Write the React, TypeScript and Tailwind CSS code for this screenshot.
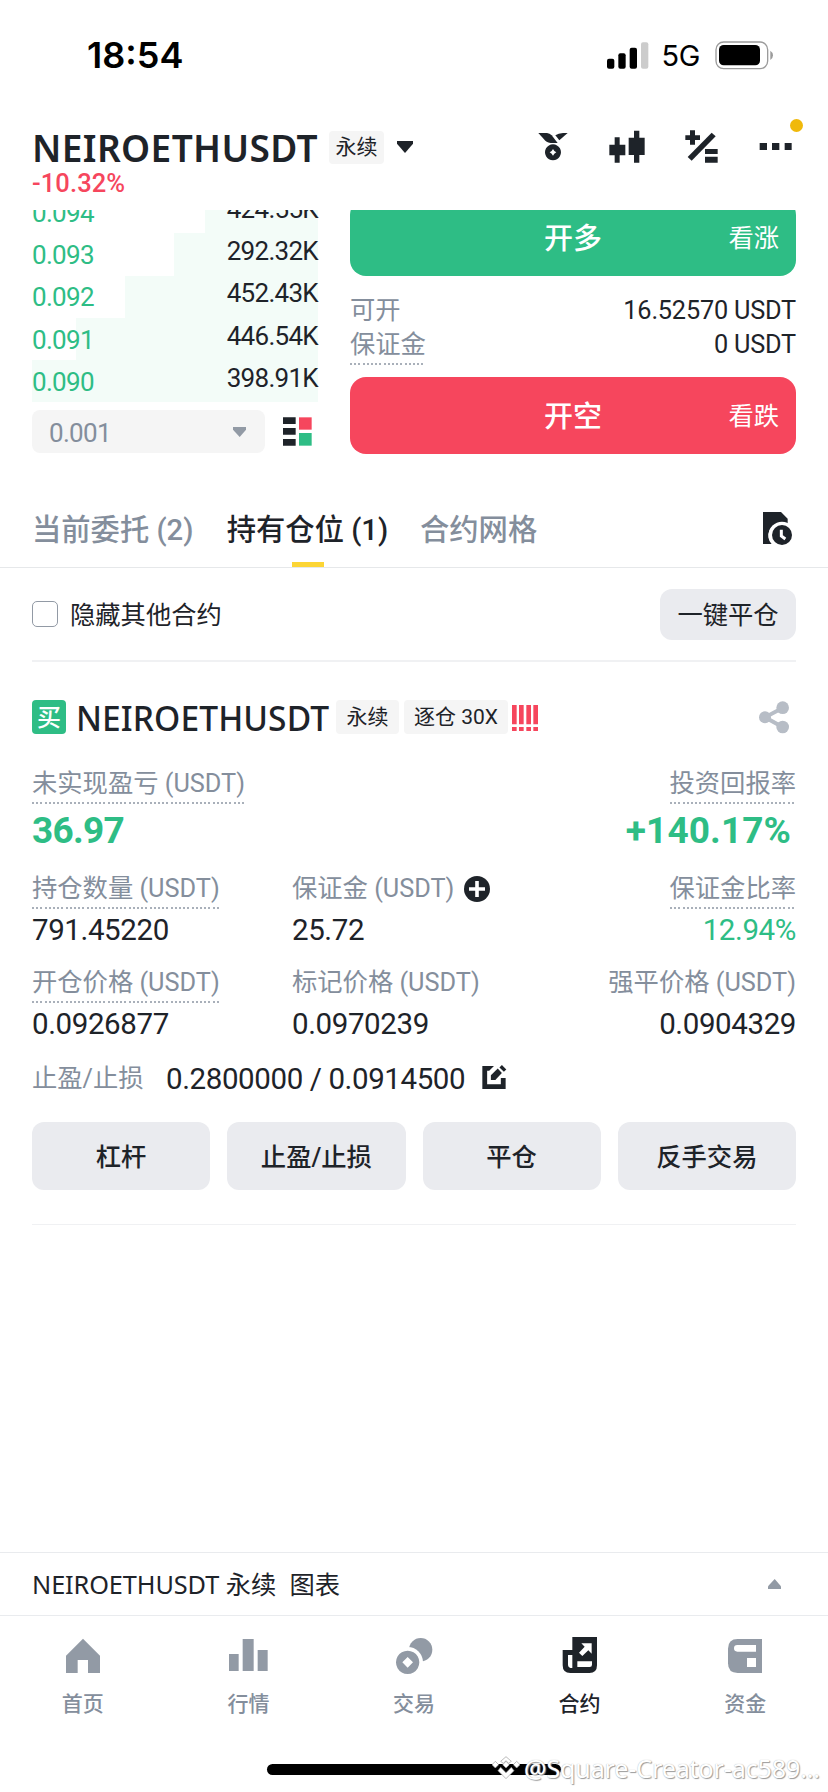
import type { ReactNode } from "react";

const bids = [
  { price: "0.094", qty: "424.55K", bar: "w-[113px]" },
  { price: "0.093", qty: "292.32K", bar: "w-[144px]" },
  { price: "0.092", qty: "452.43K", bar: "w-[193px]" },
  { price: "0.091", qty: "446.54K", bar: "w-[242px]" },
  { price: "0.090", qty: "398.91K", bar: "w-[286px]" },
];

function Dotted() {
  return (
    <div className="h-[2px] w-full bg-[repeating-linear-gradient(90deg,#848e9c_0_2px,transparent_2px_4.2px)] opacity-70" />
  );
}

function StatusBar() {
  return (
    <div className="flex h-[110px] items-center justify-between pl-[87px] pr-[55px] font-[Inter,sans-serif] text-black">
      <span className="text-[36px] leading-none font-semibold">18:54</span>
      <div className="flex items-center">
        <svg width="42" height="27" viewBox="0 0 126 81">
          <rect x="0" y="50" width="22" height="30" rx="6" />
          <rect x="34" y="34" width="22" height="46" rx="6" />
          <rect x="68" y="17" width="22" height="63" rx="6" />
          <rect x="102" y="1" width="22" height="79" rx="6" fill="#cccccc" />
        </svg>
        <span className="ml-[13px] text-[29px] leading-none tracking-[-0.4px]">5G</span>
        <svg className="-mr-[2px] ml-[15px]" width="60" height="29" viewBox="0 0 180 87">
          <rect x="3" y="3" width="155" height="80" rx="23" fill="none" stroke="#9b9b9b" strokeWidth="4" />
          <rect x="12" y="12" width="123" height="61" rx="14" />
          <path d="M166 29 Q174 34 174 43 Q174 52 166 57 Z" fill="#9b9b9b" />
        </svg>
      </div>
    </div>
  );
}

function Header() {
  return (
    <div className="flex h-[100px] justify-between pl-8 pr-[34px]">
      <div className="pt-[18px]">
        <div className="flex h-[38px] items-center">
          <span className="w-[290px] whitespace-nowrap font-['Noto_Sans',sans-serif] text-[37px] font-semibold leading-none tracking-[0.4px]">
            NEIROETHUSDT
          </span>
          <span className="ml-[7px] flex h-[33px] w-[55px] items-center justify-center rounded bg-[#f5f5f5] text-[21px] leading-none">
            永续
          </span>
          <svg className="ml-[13px]" width="16" height="12" viewBox="0 0 48 36">
            <path d="M0 0 H48 V8 L24 36 L0 8 Z" fill="#1e2329" />
          </svg>
        </div>
        <div className="mt-[4px] text-[25.5px] font-medium leading-[26px] tracking-[0.1px] text-[#f6465d]">-10.32%</div>
      </div>
      <div className="flex gap-[38.5px] pt-[19px]">
        <svg width="36" height="36" viewBox="360 387 108 108" fill="#1e2329">
          <path d="M370 399 H396 Q404 400 410 406 L428 429 H414 Q398 429 391 422 Z" />
          <path d="M458 399 H444 Q430 400 421 406 L433 421 Z" />
          <path
            fillRule="evenodd"
            d="M414 433 A24 24 0 1 1 413.9 433 Z M414 447 L410 453 L404 457 L410 461 L414 467 L418 461 L424 457 L418 453 Z"
          />
        </svg>
        <svg width="36" height="36" viewBox="583 387 108 108" fill="#1e2329">
          <path d="M600 412 h15 v22 h17 v32 h-17 v22 h-15 v-22 h-16 v-32 h16z" />
          <path d="M658 392 h16 v21 h16 v52 h-16 v23 h-16 v-23 h-16 v-52 h16z" />
        </svg>
        <svg width="36" height="36" viewBox="807 387 108 108" fill="#1e2329">
          <path d="M825 391 h15 v15 h15 v14 h-15 v14 h-15 v-14 h-14 v-14 h14z" />
          <path d="M890 398 L902 409 L830 482 L818 471 Z" />
          <path d="M870 447 h38 v15 h-38z M870 470 h38 v18 h-38z" />
        </svg>
        <div className="relative">
          <svg width="36" height="36" viewBox="1030 387 108 108" fill="#1e2329">
            <path d="M1035 429 h22 v21 h-22z M1072 429 h22 v21 h-22z M1110 429 h21 v21 h-21z" />
          </svg>
          <span className="absolute -right-[9px] -top-[10px] h-[13px] w-[13px] rounded-full bg-[#f0b90b]" />
        </div>
      </div>
    </div>
  );
}

function TradePanel() {
  return (
    <div className="flex h-[244px] justify-between overflow-hidden px-8">
      <div className="w-[286px]">
        <div className="-mt-[19px]">
          {bids.map((b) => (
            <div key={b.price} className="relative h-[42.3px]">
              <div className={`absolute right-0 top-0 h-full bg-[#f3fcf8] ${b.bar}`} />
              <div className="relative flex justify-between pt-[0.8px] text-[26px] leading-[42px] tracking-[-0.7px]">
                <span className="text-[#2ebd85]">{b.price}</span>
                <span className="-mt-1">{b.qty}</span>
              </div>
            </div>
          ))}
        </div>
        <div className="mt-[8px] flex items-center">
          <div className="flex h-[43px] w-[233px] items-center justify-between rounded-lg bg-[#f5f5f5] pl-[17px] pr-[19px] text-[26px] leading-none tracking-[-0.7px] text-[#848e9c]">
            <span className="pt-[2px]">0.001</span>
            <svg width="13" height="10" viewBox="0 0 39 30">
              <path d="M0 0 H39 V8 L20 30 L0 8 Z" fill="#929aa5" />
            </svg>
          </div>
          <svg className="ml-[18px]" width="29" height="29" viewBox="849 654 87 87">
            <path d="M849 655 h38 v20 h-38z M849 687 h38 v20 h-38z M849 720 h38 v20 h-38z" fill="#1e2329" />
            <path d="M897 655 h38 v37 h-38z" fill="#f6465d" />
            <path d="M897 702 h38 v38 h-38z" fill="#2ebd85" />
          </svg>
        </div>
      </div>
      <div className="-mt-[11px] w-[446px]">
        <OpenButton className="bg-[#2ebd85]" label="开多" side="看涨" />
        <div className="mt-[18px] flex justify-between text-[25.3px] leading-[34px]">
          <span className="text-[#848e9c]">可开</span>
          <span className="tracking-[-0.2px]">16.52570 USDT</span>
        </div>
        <div className="flex h-[49.5px] justify-between text-[25.3px] leading-[34px]">
          <div className="text-[#848e9c]">
            保证金
            <div className="pt-[1px]">
              <Dotted />
            </div>
          </div>
          <span className="tracking-[-0.2px]">0 USDT</span>
        </div>
        <OpenButton className="bg-[#f6465d]" label="开空" side="看跌" />
      </div>
    </div>
  );
}

function OpenButton({ className, label, side }: { className: string; label: string; side: string }) {
  return (
    <div className={`grid h-[76.5px] grid-cols-[1fr_auto_1fr] items-center rounded-2xl pr-[17px] text-white ${className}`}>
      <span />
      <span className="ml-[17px] pt-[4px] text-[29px] font-medium leading-none">{label}</span>
      <span className="pt-[3px] text-right text-[25.3px] leading-none">{side}</span>
    </div>
  );
}

function Tabs() {
  return (
    <div className="flex h-[114px] border-b border-[#e6e8ea] px-8 text-[29.3px] font-medium">
      <div className="w-[195px] pt-[57px] leading-[38px] text-[#848e9c]">当前委托 (2)</div>
      <div className="flex w-[161px] flex-col items-center pt-[57px]">
        <span className="whitespace-nowrap leading-[38px]">持有仓位 (1)</span>
        <span className="mt-auto h-[5px] w-[32px] bg-[#fcd535]" />
      </div>
      <div className="ml-[32px] pt-[57px] leading-[38px] text-[#848e9c]">合约网格</div>
      <svg className="ml-auto mr-[3px] mt-[56px]" width="32" height="36" viewBox="1036 60 96 108">
        <path d="M1042 66 H1096 L1116 86 V101 H1098 A36 36 0 0 0 1068 162 H1042 Z" fill="#1e2329" />
        <circle cx="1099" cy="135" r="40" fill="#fff" />
        <circle cx="1099" cy="135" r="30" fill="#1e2329" />
        <path d="M1097 119 V138 L1109 147" fill="none" stroke="#fff" strokeWidth="9" />
      </svg>
    </div>
  );
}

function Tag({ className, children }: { className: string; children: ReactNode }) {
  return (
    <span className={`flex h-[34px] items-center justify-center rounded bg-[#f5f5f5] text-[21px] leading-none ${className}`}>
      {children}
    </span>
  );
}

function Stat({
  label,
  value,
  dotted,
  right,
  green,
  extra,
}: {
  label: string;
  value: string;
  dotted?: boolean;
  right?: boolean;
  green?: boolean;
  extra?: ReactNode;
}) {
  return (
    <div className={`flex flex-col ${right ? "items-end" : "items-start"}`}>
      <div className="h-[41px] whitespace-nowrap text-[25.3px] leading-[36px] text-[#848e9c]">
        <div className="flex items-center">
          <span>{label}</span>
          {extra}
        </div>
        {dotted && <Dotted />}
      </div>
      <span className={`text-[29.5px] leading-[36px] tracking-[-0.4px] ${green ? "text-[#2ebd85]" : ""}`}>{value}</span>
    </div>
  );
}

function Position() {
  return (
    <div className="mx-8 h-[563px] border-b border-[#f0f1f3] pt-[38px]">
      <div className="flex h-[34px] items-center">
        <span className="flex h-[34px] w-[34px] items-center justify-center rounded bg-[#2ebd85] pt-[1px] text-[24px] font-medium leading-none text-white">
          买
        </span>
        <span className="ml-[10px] w-[254px] whitespace-nowrap pt-[3px] font-['Noto_Sans',sans-serif] text-[33.5px] font-medium leading-none tracking-[0.1px]">
          NEIROETHUSDT
        </span>
        <Tag className="ml-[6px] w-[63px] pt-[1px]">永续</Tag>
        <Tag className="ml-[5px] w-[104px] pt-[1px]">逐仓 30X</Tag>
        <svg className="ml-[4px] mt-[2px]" width="26" height="26" viewBox="294 645 78 78" fill="#f6465d">
          <path d="M294 645h14v58h-14z M315 645h14v58h-14z M337 645h14v58h-14z M358 645h14v58h-14z" />
          <path d="M294 711h14v12h-14z M315 711h14v12h-14z M337 711h14v12h-14z M358 711h14v12h-14z" />
        </svg>
        <svg className="ml-auto mr-[7px]" width="30" height="33" viewBox="1035 634 90 99" fill="#b7bdc6">
          <path d="M1107 654 L1053 683 L1107 713" fill="none" stroke="#b7bdc6" strokeWidth="12" />
          <circle cx="1106" cy="654" r="19" />
          <circle cx="1053" cy="683" r="18" />
          <circle cx="1106" cy="712" r="19" />
        </svg>
      </div>

      <div className="mt-[32px] flex h-[105px] justify-between">
        <div>
          <div className="w-fit text-[25.3px] leading-[36px] text-[#848e9c]">
            未实现盈亏 (USDT)
            <Dotted />
          </div>
          <div className="pt-[5px] text-[37px] font-bold leading-[44px] tracking-[-0.7px] text-[#2ebd85]">36.97</div>
        </div>
        <div className="flex flex-col items-end">
          <div className="text-[25.3px] leading-[36px] text-[#848e9c]">
            投资回报率
            <Dotted />
          </div>
          <div className="pr-[5px] pt-[5px] text-[37px] font-bold leading-[44px] tracking-[0.1px] text-[#2ebd85]">
            +140.17%
          </div>
        </div>
      </div>

      <div className="grid h-[94px] grid-cols-[260px_1fr_1fr]">
        <Stat label="持仓数量 (USDT)" value="791.45220" dotted />
        <Stat
          label="保证金 (USDT)"
          value="25.72"
          extra={
            <svg className="ml-[10px]" width="26" height="26" viewBox="0 0 26 26">
              <circle cx="13" cy="13" r="13" fill="#1e2329" />
              <path d="M13 5 V21 M5 13 H21" stroke="#fff" strokeWidth="3.6" />
            </svg>
          }
        />
        <Stat label="保证金比率" value="12.94%" dotted right green />
      </div>
      <div className="grid h-[96px] grid-cols-[260px_1fr_1fr]">
        <Stat label="开仓价格 (USDT)" value="0.0926877" dotted />
        <Stat label="标记价格 (USDT)" value="0.0970239" />
        <Stat label="强平价格 (USDT)" value="0.0904329" right />
      </div>

      <div className="flex h-[36px] items-center">
        <span className="w-[134px] text-[25.3px] leading-[36px] text-[#848e9c]">止盈/止损</span>
        <span className="text-[29.5px] leading-[36px] tracking-[-0.4px]">0.2800000 / 0.0914500</span>
        <svg className="-mt-[3px] ml-[17px]" width="25" height="25" viewBox="201 314 73 73" fill="#1e2329">
          <path d="M202 317 H236 L222 331 H216 V370 H256 V352 H270 V384 H202 Z" />
          <path d="M227 344 L247 324 L259 337 L240 358 H227 Z" />
          <path d="M252 321 L259 314 L272 327 L265 334 Z" />
        </svg>
      </div>

      <div className="mt-[25px] grid h-[68px] grid-cols-4 gap-[17px]">
        {["杠杆", "止盈/止损", "平仓", "反手交易"].map((t) => (
          <div
            key={t}
            className="flex items-center justify-center rounded-xl bg-[#eaebef] pt-[3px] text-[25.3px] font-medium leading-none"
          >
            {t}
          </div>
        ))}
      </div>
    </div>
  );
}

function NavItem({ label, active, children }: { label: string; active?: boolean; children: ReactNode }) {
  return (
    <div className={`flex flex-1 flex-col items-center pt-[20px] ${active ? "text-[#1e2329]" : "text-[#848e9c]"}`}>
      {children}
      <span className="mt-[13px] text-[21px] font-medium leading-[30px]">{label}</span>
    </div>
  );
}

function BottomNav() {
  return (
    <div className="flex h-[176px]">
      <NavItem label="首页">
        <svg width="40" height="40" viewBox="189 288 120 120" fill="#929aa5">
          <path d="M249 296 L300 347 V399 H264 V360 H233 V399 H198 V347 Z" />
        </svg>
      </NavItem>
      <NavItem label="行情">
        <svg width="40" height="40" viewBox="685 288 120 120" fill="#929aa5">
          <path d="M688 342h29v51h-29z M729 297h33v96h-33z M774 330h30v63h-30z" />
        </svg>
      </NavItem>
      <NavItem label="交易">
        <svg width="40" height="40" viewBox="1182 288 120 120" fill="#929aa5">
          <circle cx="1262" cy="329" r="35" />
          <circle cx="1223" cy="367" r="46" fill="#fff" />
          <path fillRule="evenodd" d="M1223 332 A35 35 0 1 1 1222.9 332 Z M1223 351 L1207 367 L1223 383 L1239 367 Z" />
        </svg>
      </NavItem>
      <NavItem label="合约" active>
        <svg width="40" height="40" viewBox="437 288 120 120" fill="#1e2329">
          <path d="M474 291 H548 V376 Q548 399 525 399 H468 Q445 399 445 376 V330 H474 Z" />
          <path d="M461 345 H474 V384 Q461 384 461 374 Z M489 364 H533 V374 Q533 381 526 381 H489 Z" fill="#fff" />
          <path d="M501 310 H532 V341 L522 331 L504 348 L494 338 L511 320 Z" fill="#fff" />
        </svg>
      </NavItem>
      <NavItem label="资金">
        <svg width="40" height="40" viewBox="933 288 120 120" fill="#929aa5">
          <path d="M971 297 H1044 V399 H971 Q942 399 942 370 V326 Q942 297 971 297 Z" />
          <path d="M970 315 H1026 V335 H970 A10 10 0 0 1 970 315 Z M999 354 H1026 V381 H999 Z" fill="#fff" />
        </svg>
      </NavItem>
    </div>
  );
}

export default function App() {
  return (
    <div className="relative flex h-[1792px] w-[828px] flex-col overflow-hidden bg-white font-[Roboto,'Noto_Sans_CJK_SC',sans-serif] text-[#1e2329]">
      <StatusBar />
      <Header />
      <TradePanel />
      <Tabs />
      <div className="mx-8 flex h-[94px] items-center justify-between border-b-2 border-[#f0f1f3]">
        <div className="flex items-center text-[25.3px] leading-none">
          <span className="mr-[12px] h-[26px] w-[26px] rounded-[5px] border-[1.5px] border-[#929aa5]" />
          <span className="pt-[4px]">隐藏其他合约</span>
        </div>
        <div className="flex h-[51px] w-[136px] items-center justify-center rounded-xl bg-[#eaebef] pt-[3px] text-[25.3px] leading-none">
          一键平仓
        </div>
      </div>
      <Position />
      <div className="mt-auto flex h-[64px] shrink-0 items-center justify-between border-y border-[#e9ebee] pl-8 pr-[47px] text-[25.3px]">
        <span className="whitespace-pre pt-[2px] font-['Noto_Sans','Noto_Sans_CJK_SC',sans-serif]">
          <span className="tracking-[-0.1px]">NEIROETHUSDT</span> 永续  图表
        </span>
        <svg width="13" height="10" viewBox="0 0 39 30">
          <path d="M0 30 H39 V22 L20 0 L0 22 Z" fill="#929aa5" />
        </svg>
      </div>
      <BottomNav />
      <div className="absolute bottom-[17px] left-[267px] h-[11px] w-[294px] rounded-full bg-black" />
      <div className="absolute bottom-[9px] left-[492px] flex items-center">
        <svg width="28" height="24" viewBox="0 0 84 72" fill="#fff" stroke="#999" strokeWidth="2">
          <path d="M42 2 L58 16 L50 22 L42 14 L34 22 L26 16 Z M42 16 L52 26 L42 36 L32 26 Z M10 16 L20 26 L10 36 L0 26 Z M74 16 L84 26 L74 36 L64 26 Z M26 34 L42 50 L58 34 L66 44 L42 68 L18 44 Z" />
        </svg>
        <span className="ml-[4px] whitespace-nowrap font-['Noto_Sans',sans-serif] text-[25px] leading-[30px] tracking-[-0.1px] text-white [text-shadow:0_0_1px_#aaa,1px_1px_1px_#999]">
          @Square-Creator-ac589...
        </span>
      </div>
    </div>
  );
}
